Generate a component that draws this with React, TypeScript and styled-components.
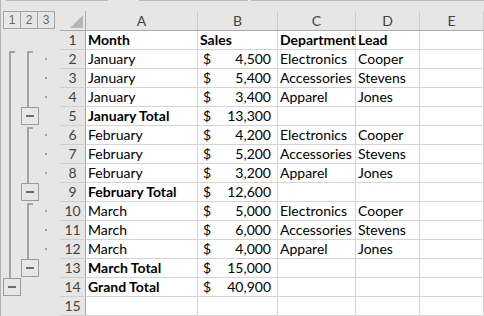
import styled, { createGlobalStyle } from 'styled-components'

const GlobalStyle = createGlobalStyle`
  html, body { margin: 0; padding: 0; background: #e6e6e6; }
  * { box-sizing: border-box; }
`

type Row = {
  month: string
  sales: string
  dept?: string
  lead?: string
  bold?: boolean
}

const rows: Row[] = [
  { month: 'January', sales: '4,500', dept: 'Electronics', lead: 'Cooper' },
  { month: 'January', sales: '5,400', dept: 'Accessories', lead: 'Stevens' },
  { month: 'January', sales: '3,400', dept: 'Apparel', lead: 'Jones' },
  { month: 'January Total', sales: '13,300', bold: true },
  { month: 'February', sales: '4,200', dept: 'Electronics', lead: 'Cooper' },
  { month: 'February', sales: '5,200', dept: 'Accessories', lead: 'Stevens' },
  { month: 'February', sales: '3,200', dept: 'Apparel', lead: 'Jones' },
  { month: 'February Total', sales: '12,600', bold: true },
  { month: 'March', sales: '5,000', dept: 'Electronics', lead: 'Cooper' },
  { month: 'March', sales: '6,000', dept: 'Accessories', lead: 'Stevens' },
  { month: 'March', sales: '4,000', dept: 'Apparel', lead: 'Jones' },
  { month: 'March Total', sales: '15,000', bold: true },
  { month: 'Grand Total', sales: '40,900', bold: true },
]

const columns = ['A', 'B', 'C', 'D', 'E']

// level 2 groups: [first sheet row, row of the collapse button]
const groups = [
  [2, 5],
  [6, 9],
  [10, 13],
]
const detailRows = [2, 3, 4, 6, 7, 8, 10, 11, 12]

const Window = styled.div`
  width: 484px;
  height: 316px;
  overflow: hidden;
  border-left: 1px solid #b4b4b4;
  background: #e6e6e6;
  font-family: Lato, 'Liberation Sans', sans-serif;
`

const TopStrip = styled.div`
  height: 11px;
  display: flex;
  padding-left: 5px;
`

const StripSegment = styled.div<{ $w: number; $ml?: number }>`
  width: ${(p) => p.$w}px;
  margin-left: ${(p) => p.$ml ?? 0}px;
  height: 1px;
  background: #b9b9b9;
`

const Main = styled.div`
  display: grid;
  grid-template-columns: 59px 424px;
`

const Gutter = styled.div`
  display: grid;
  grid-template-columns: 2px repeat(3, 18px) 1fr;
  grid-template-rows: 20px repeat(15, 19px);
`

const LevelButtons = styled.div`
  grid-column: 2 / 5;
  grid-row: 1;
  display: flex;
  height: 18px;
`

const LevelButton = styled.div`
  width: 18px;
  height: 18px;
  margin-right: -1px;
  border: 1px solid #a3a3a3;
  color: #6a6a6a;
  font-family: 'Liberation Sans', sans-serif;
  font-size: 12px;
  line-height: 16px;
  text-align: center;
`

const Bar = styled.div<{ $col: number; $from: number; $to: number }>`
  grid-column: ${(p) => p.$col + 1};
  grid-row: ${(p) => p.$from + 1} / ${(p) => p.$to + 1};
  margin: 1px 0 0 6px;
  width: 6px;
  border-left: 2px solid #a3a3a3;
  border-top: 2px solid #a3a3a3;
`

const Collapse = styled.div<{ $col: number; $row: number }>`
  grid-column: ${(p) => p.$col + 1};
  grid-row: ${(p) => p.$row + 1};
  width: 18px;
  height: 18px;
  border: 1px solid #9c9c9c;
  display: flex;
  align-items: center;
  justify-content: center;

  &::after {
    content: '';
    width: 8px;
    height: 2px;
    background: #6d6d6d;
  }
`

const Dot = styled.div<{ $row: number }>`
  grid-column: 4;
  grid-row: ${(p) => p.$row + 1};
  width: 2px;
  height: 2px;
  margin: 8px 0 0 6px;
  background: #a3a3a3;
`

const Sheet = styled.div`
  display: grid;
  grid-template-columns: 26px 112px 80px 78px 64px 64px;
  grid-template-rows: 20px repeat(15, 19px);
  background: #fff;
`

const Corner = styled.div`
  position: relative;
  background: #e6e6e6;
  border-right: 1px solid #ababab;
  border-bottom: 1px solid #ababab;

  &::after {
    content: '';
    position: absolute;
    right: 2px;
    bottom: 2px;
    width: 13px;
    height: 13px;
    background: #b7b7b7;
    clip-path: polygon(100% 0, 100% 100%, 0 100%);
  }
`

const ColHead = styled.div`
  background: #e6e6e6;
  border-right: 1px solid #cdcdcd;
  border-bottom: 1px solid #ababab;
  color: #444;
  font-size: 14px;
  line-height: 19px;
  text-align: center;
`

const RowHead = styled.div`
  background: #e6e6e6;
  border-right: 1px solid #ababab;
  border-bottom: 1px solid #d0d0d0;
  color: #444;
  font-size: 14px;
  line-height: 18px;
  text-align: center;
`

const Cell = styled.div<{ $bold?: boolean }>`
  border-right: 1px solid #d4d4d4;
  border-bottom: 1px solid #d4d4d4;
  padding: 0 2px;
  font-size: 14px;
  line-height: 18px;
  font-weight: ${(p) => (p.$bold ? 700 : 400)};
  color: #000;
  white-space: nowrap;
`

const MoneyCell = styled(Cell)`
  display: flex;
  justify-content: space-between;
  padding: 0 6px 0 5px;
`

export default function App() {
  return (
    <>
      <GlobalStyle />
      <Window>
        <TopStrip>
          <StripSegment $w={102} />
          <StripSegment $w={110} $ml={31} />
          <StripSegment $w={234} $ml={3} />
        </TopStrip>
        <Main>
          <Gutter>
            <LevelButtons>
              {['1', '2', '3'].map((l) => (
                <LevelButton key={l}>{l}</LevelButton>
              ))}
            </LevelButtons>
            <Bar $col={1} $from={2} $to={14} />
            <Collapse $col={1} $row={14} />
            {groups.map(([from, to]) => (
              <Bar key={`bar_${from}`} $col={2} $from={from} $to={to} />
            ))}
            {groups.map(([, to]) => (
              <Collapse key={`btn_${to}`} $col={2} $row={to} />
            ))}
            {detailRows.map((r) => (
              <Dot key={`dot_${r}`} $row={r} />
            ))}
          </Gutter>
          <Sheet>
            <Corner />
            {columns.map((c) => (
              <ColHead key={c}>{c}</ColHead>
            ))}
            <RowHead>1</RowHead>
            <Cell $bold>Month</Cell>
            <Cell $bold>Sales</Cell>
            <Cell $bold>Department</Cell>
            <Cell $bold>Lead</Cell>
            <Cell />
            {rows.map((r, i) => (
              <Row key={`row_${i}`} n={i + 2} row={r} />
            ))}
            <RowHead>15</RowHead>
            <Cell />
            <Cell />
            <Cell />
            <Cell />
            <Cell />
          </Sheet>
        </Main>
      </Window>
    </>
  )
}

const Row = ({ n, row }: { n: number; row: Row }) => (
  <>
    <RowHead>{n}</RowHead>
    <Cell $bold={row.bold}>{row.month}</Cell>
    <MoneyCell>
      <span>$</span>
      <span>{row.sales}</span>
    </MoneyCell>
    <Cell>{row.dept}</Cell>
    <Cell>{row.lead}</Cell>
    <Cell />
  </>
)
